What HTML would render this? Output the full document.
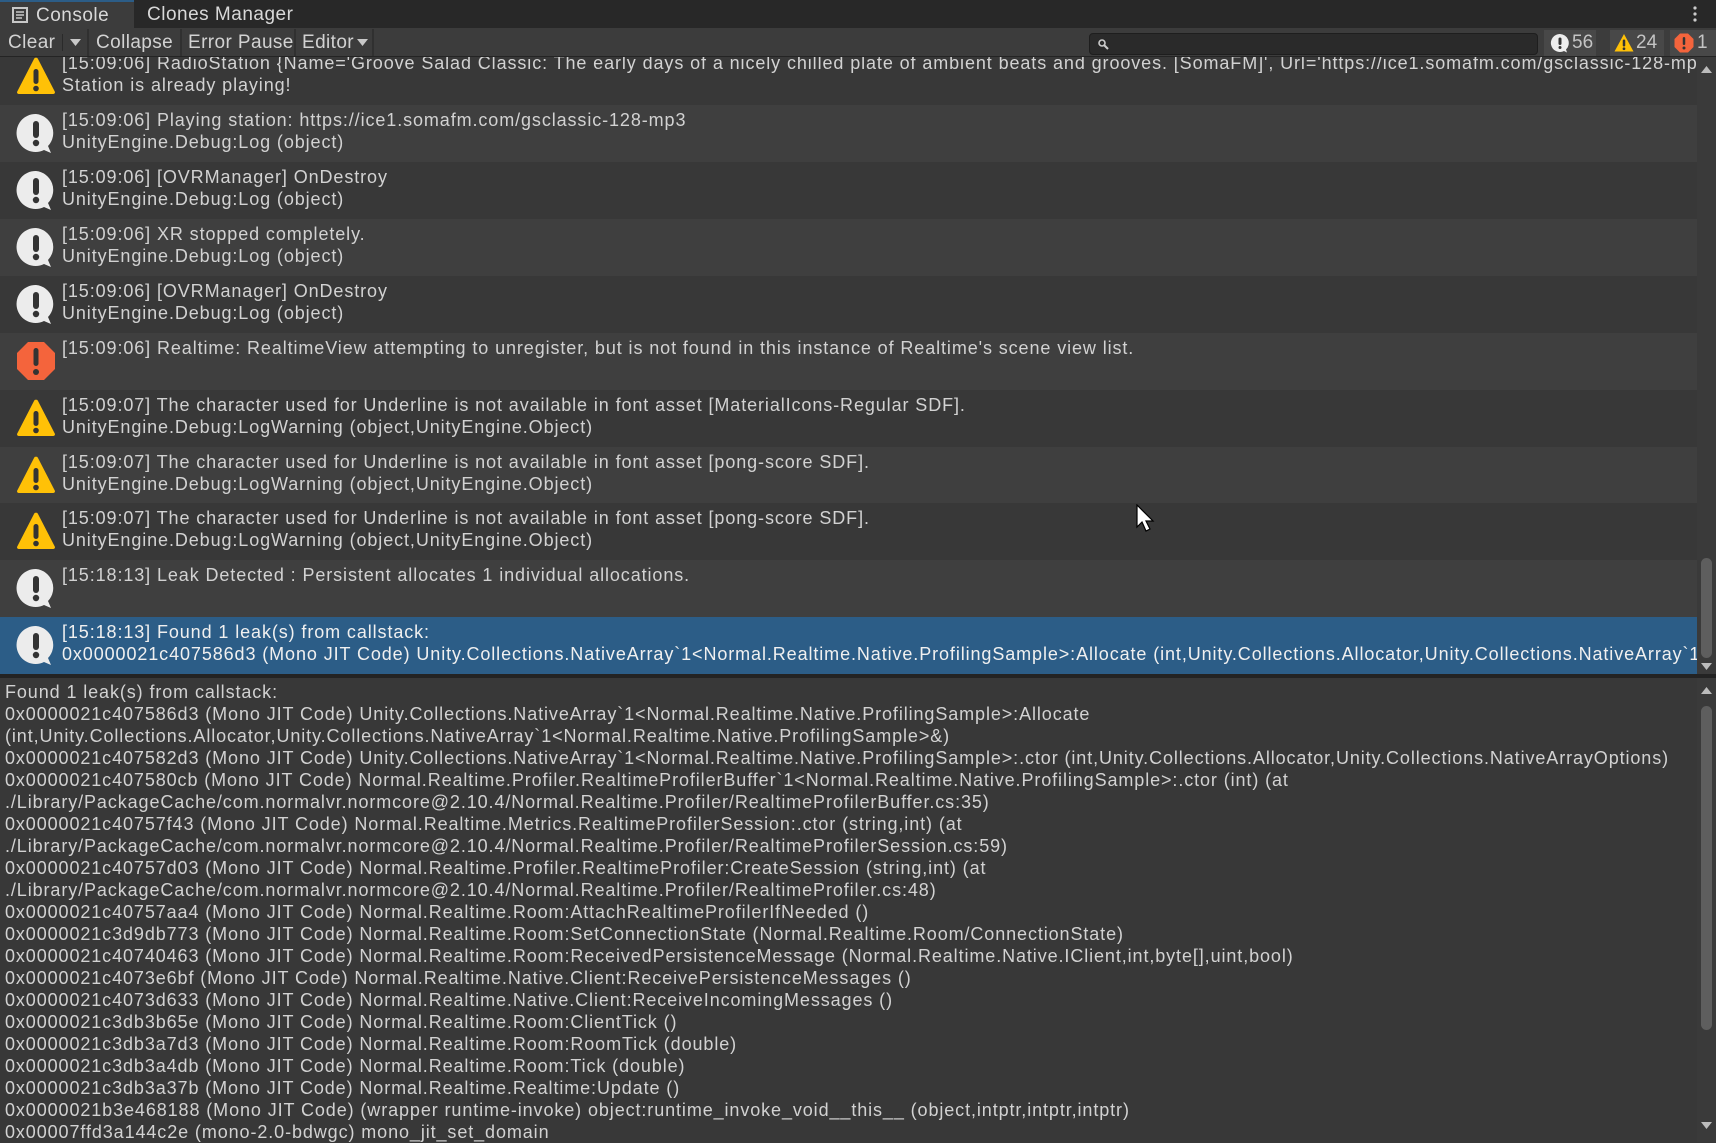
<!DOCTYPE html>
<html><head><meta charset="utf-8"><style>
*{margin:0;padding:0;box-sizing:border-box}
body{width:1716px;height:1142px;overflow:hidden;background:#383838;font-family:"Liberation Sans",sans-serif;color:#d2d2d2;position:relative}
.tabs{position:absolute;left:0;top:0;width:1716px;height:28px;background:#282828;z-index:5}
.tab1{position:absolute;left:0;top:0;width:134px;height:28px;background:#3c3c3c;border-top:2px solid #2c5d87;font-size:19px;line-height:27px;padding-left:36px;color:#d8d8d8;letter-spacing:0.5px;z-index:6}
.tab2{position:absolute;left:147px;top:0;font-size:19px;line-height:29px;color:#d8d8d8;letter-spacing:0.5px;z-index:6}
.tb{position:absolute;left:0;top:28px;width:1716px;height:29px;background:#3c3c3c;border-bottom:1px solid #242424;z-index:5}
.btn{position:absolute;top:1px;height:27px;font-size:19px;line-height:27px;color:#d2d2d2;padding-left:3px;letter-spacing:0.4px}
.sep{position:absolute;top:1px;width:2px;height:27px;background:#303030}
.search{position:absolute;left:1089px;top:33px;width:449px;height:22px;background:#2a2a2a;border:1px solid #1e1e1e;border-radius:4px;z-index:6}
.badge{position:absolute;top:30px;height:26px;background:#484848;font-size:19px;line-height:26px;color:#c4c4c4;z-index:6}
.row{position:absolute;left:0;width:1697px;height:57px;font-size:18px;letter-spacing:0.9px;line-height:22px;padding-left:62px;padding-top:4px;white-space:nowrap;overflow:hidden}
.a{background:#383838}.b{background:#3f3f3f}
.sel{background:#2c5d87;color:#f0f0f0}
.ic{position:absolute;left:16px;top:8px;width:40px;height:40px}
.split{position:absolute;left:0;top:674px;width:1716px;height:4px;background:#232323}
.det{position:absolute;left:5px;top:681px;font-size:18px;letter-spacing:0.9px;line-height:22px;white-space:pre;color:#d2d2d2}
.sb{position:absolute;left:1697px;width:19px;background:#3a3a3a}
.thumb{position:absolute;left:1701px;width:11px;background:#5e5e5e;border-radius:6px}
</style></head><body>
<div class="tabs"></div>
<div class="tab1"><svg style="position:absolute;left:12px;top:5px" width="16" height="16" viewBox="0 0 16 16"><rect x="1" y="1" width="14" height="14" fill="none" stroke="#c8c8c8" stroke-width="2"/><path d="M4 5h8M4 8h8M4 11h6" stroke="#c8c8c8" stroke-width="1.6"/></svg>Console</div>
<div class="tab2">Clones Manager</div>
<svg style="position:absolute;left:1692px;top:5px;z-index:7" width="6" height="18"><circle cx="3" cy="3" r="1.6" fill="#ccc"/><circle cx="3" cy="9" r="1.6" fill="#ccc"/><circle cx="3" cy="15" r="1.6" fill="#ccc"/></svg>
<div class="tb">
<div class="btn" style="left:5px">Clear</div>
<div class="sep" style="left:62px;width:1px;top:6px;height:17px;background:#2a2a2a"></div>
<svg style="position:absolute;left:70px;top:11px" width="11" height="7"><path d="M0 0h11L5.5 7z" fill="#c8c8c8"/></svg>
<div class="sep" style="left:87px"></div>
<div class="btn" style="left:93px">Collapse</div>
<div class="sep" style="left:180px"></div>
<div class="btn" style="left:185px">Error Pause</div>
<div class="sep" style="left:294px"></div>
<div class="btn" style="left:299px">Editor</div>
<svg style="position:absolute;left:357px;top:11px" width="11" height="7"><path d="M0 0h11L5.5 7z" fill="#c8c8c8"/></svg>
<div class="sep" style="left:372px"></div>
</div>
<div class="search"><svg style="position:absolute;left:7px;top:4px" width="12" height="12"><circle cx="5" cy="5" r="3" fill="none" stroke="#ccc" stroke-width="1.6"/><path d="M7 7l4 4" stroke="#ccc" stroke-width="2"/></svg></div>
<div class="badge" style="left:1544px;width:52px"><svg style="position:absolute;left:6px;top:3px" width="20" height="20" viewBox="0 0 40 40"><path d="M20 2a18 18 0 1 0 8 34l6 3-2-6A18 18 0 0 0 20 2z" fill="#eee"/><rect x="17" y="9" width="6" height="15" rx="3" fill="#333"/><circle cx="20" cy="29" r="3" fill="#333"/></svg><span style="position:absolute;left:28px">56</span></div>
<div class="badge" style="left:1610px;width:54px"><svg style="position:absolute;left:4px;top:3px" width="20" height="20" viewBox="0 0 40 40"><path d="M20 2L39 37H1z" fill="#ffc107"/><rect x="17.5" y="13" width="5" height="14" rx="2.5" fill="#333"/><circle cx="20" cy="31.5" r="2.7" fill="#333"/></svg><span style="position:absolute;left:26px">24</span></div>
<div class="badge" style="left:1670px;width:46px"><svg style="position:absolute;left:4px;top:3px" width="20" height="20" viewBox="0 0 40 40"><path d="M12 1h16l11 11v16L28 39H12L1 28V12z" fill="#f4643c"/><rect x="17.5" y="8" width="5" height="16" rx="2.5" fill="#333"/><circle cx="20" cy="30" r="3" fill="#333"/></svg><span style="position:absolute;left:27px">1</span></div>

<svg width="0" height="0" style="position:absolute"><defs>
<g id="info"><path d="M20 1a19 19 0 1 0 8 36l7 3-3-7A19 19 0 0 0 20 1z" fill="#ececec"/><rect x="17" y="8" width="6" height="17" rx="3" fill="#333"/><circle cx="20" cy="30" r="3.2" fill="#333"/></g>
<g id="warn"><path d="M20 2Q21 1 22 3L39 36Q39 38 37 38H3Q1 38 1 36L18 3Q19 1 20 2z" fill="#ffc107"/><rect x="17.5" y="13" width="5" height="15" rx="2.5" fill="#333"/><circle cx="20" cy="32.5" r="2.8" fill="#333"/></g>
<g id="err"><path d="M12 1h16l11 11v16L28 39H12L1 28V12z" fill="#f4643c"/><rect x="17.5" y="7" width="5" height="18" rx="2.5" fill="#333"/><circle cx="20" cy="31" r="3" fill="#333"/></g>
</defs></svg>

<div class="row a" style="top:48px"><svg class="ic" viewBox="0 0 40 40"><use href="#warn"/></svg>[15:09:06] RadioStation {Name='Groove Salad Classic: The early days of a nicely chilled plate of ambient beats and grooves. [SomaFM]', Url='https://ice1.somafm.com/gsclassic-128-mp3', <br>Station is already playing!</div>
<div class="row b" style="top:105px"><svg class="ic" viewBox="0 0 40 40"><use href="#info"/></svg>[15:09:06] Playing station: https://ice1.somafm.com/gsclassic-128-mp3<br>UnityEngine.Debug:Log (object)</div>
<div class="row a" style="top:162px"><svg class="ic" viewBox="0 0 40 40"><use href="#info"/></svg>[15:09:06] [OVRManager] OnDestroy<br>UnityEngine.Debug:Log (object)</div>
<div class="row b" style="top:219px"><svg class="ic" viewBox="0 0 40 40"><use href="#info"/></svg>[15:09:06] XR stopped completely.<br>UnityEngine.Debug:Log (object)</div>
<div class="row a" style="top:276px"><svg class="ic" viewBox="0 0 40 40"><use href="#info"/></svg>[15:09:06] [OVRManager] OnDestroy<br>UnityEngine.Debug:Log (object)</div>
<div class="row b" style="top:333px"><svg class="ic" viewBox="0 0 40 40"><use href="#err"/></svg>[15:09:06] Realtime: RealtimeView attempting to unregister, but is not found in this instance of Realtime's scene view list.</div>
<div class="row a" style="top:390px"><svg class="ic" viewBox="0 0 40 40"><use href="#warn"/></svg>[15:09:07] The character used for Underline is not available in font asset [MaterialIcons-Regular SDF].<br>UnityEngine.Debug:LogWarning (object,UnityEngine.Object)</div>
<div class="row b" style="top:447px"><svg class="ic" viewBox="0 0 40 40"><use href="#warn"/></svg>[15:09:07] The character used for Underline is not available in font asset [pong-score SDF].<br>UnityEngine.Debug:LogWarning (object,UnityEngine.Object)</div>
<div class="row a" style="top:503px"><svg class="ic" viewBox="0 0 40 40"><use href="#warn"/></svg>[15:09:07] The character used for Underline is not available in font asset [pong-score SDF].<br>UnityEngine.Debug:LogWarning (object,UnityEngine.Object)</div>
<div class="row b" style="top:560px"><svg class="ic" viewBox="0 0 40 40"><use href="#info"/></svg>[15:18:13] Leak Detected : Persistent allocates 1 individual allocations.</div>
<div class="row sel" style="top:617px"><svg class="ic" viewBox="0 0 40 40"><use href="#info"/></svg>[15:18:13] Found 1 leak(s) from callstack:<br>0x0000021c407586d3 (Mono JIT Code) Unity.Collections.NativeArray`1&lt;Normal.Realtime.Native.ProfilingSample&gt;:Allocate (int,Unity.Collections.Allocator,Unity.Collections.NativeArray`1&lt;Normal.Realtime.Native.ProfilingSample&gt;&amp;)</div>
<div class="sb" style="top:57px;height:617px"></div>
<div class="thumb" style="top:558px;height:100px"></div>
<svg style="position:absolute;left:1701px;top:66px" width="11" height="7"><path d="M0 7h11L5.5 0z" fill="#bbb"/></svg>
<svg style="position:absolute;left:1701px;top:663px" width="11" height="7"><path d="M0 0h11L5.5 7z" fill="#bbb"/></svg>
<div class="split"></div>
<div class="det">Found 1 leak(s) from callstack:
0x0000021c407586d3 (Mono JIT Code) Unity.Collections.NativeArray`1&lt;Normal.Realtime.Native.ProfilingSample&gt;:Allocate
(int,Unity.Collections.Allocator,Unity.Collections.NativeArray`1&lt;Normal.Realtime.Native.ProfilingSample&gt;&amp;)
0x0000021c407582d3 (Mono JIT Code) Unity.Collections.NativeArray`1&lt;Normal.Realtime.Native.ProfilingSample&gt;:.ctor (int,Unity.Collections.Allocator,Unity.Collections.NativeArrayOptions)
0x0000021c407580cb (Mono JIT Code) Normal.Realtime.Profiler.RealtimeProfilerBuffer`1&lt;Normal.Realtime.Native.ProfilingSample&gt;:.ctor (int) (at
./Library/PackageCache/com.normalvr.normcore@2.10.4/Normal.Realtime.Profiler/RealtimeProfilerBuffer.cs:35)
0x0000021c40757f43 (Mono JIT Code) Normal.Realtime.Metrics.RealtimeProfilerSession:.ctor (string,int) (at
./Library/PackageCache/com.normalvr.normcore@2.10.4/Normal.Realtime.Profiler/RealtimeProfilerSession.cs:59)
0x0000021c40757d03 (Mono JIT Code) Normal.Realtime.Profiler.RealtimeProfiler:CreateSession (string,int) (at
./Library/PackageCache/com.normalvr.normcore@2.10.4/Normal.Realtime.Profiler/RealtimeProfiler.cs:48)
0x0000021c40757aa4 (Mono JIT Code) Normal.Realtime.Room:AttachRealtimeProfilerIfNeeded ()
0x0000021c3d9db773 (Mono JIT Code) Normal.Realtime.Room:SetConnectionState (Normal.Realtime.Room/ConnectionState)
0x0000021c40740463 (Mono JIT Code) Normal.Realtime.Room:ReceivedPersistenceMessage (Normal.Realtime.Native.IClient,int,byte[],uint,bool)
0x0000021c4073e6bf (Mono JIT Code) Normal.Realtime.Native.Client:ReceivePersistenceMessages ()
0x0000021c4073d633 (Mono JIT Code) Normal.Realtime.Native.Client:ReceiveIncomingMessages ()
0x0000021c3db3b65e (Mono JIT Code) Normal.Realtime.Room:ClientTick ()
0x0000021c3db3a7d3 (Mono JIT Code) Normal.Realtime.Room:RoomTick (double)
0x0000021c3db3a4db (Mono JIT Code) Normal.Realtime.Room:Tick (double)
0x0000021c3db3a37b (Mono JIT Code) Normal.Realtime.Realtime:Update ()
0x0000021b3e468188 (Mono JIT Code) (wrapper runtime-invoke) object:runtime_invoke_void__this__ (object,intptr,intptr,intptr)
0x00007ffd3a144c2e (mono-2.0-bdwgc) mono_jit_set_domain</div>
<div class="sb" style="top:678px;height:464px"></div>
<div class="thumb" style="top:706px;height:324px"></div>
<svg style="position:absolute;left:1701px;top:687px" width="11" height="7"><path d="M0 7h11L5.5 0z" fill="#bbb"/></svg>
<svg style="position:absolute;left:1701px;top:1122px" width="11" height="7"><path d="M0 0h11L5.5 7z" fill="#bbb"/></svg>
<svg style="position:absolute;left:1136px;top:504px" width="20" height="28" viewBox="0 0 20 28"><path d="M1 1v22l5-5 4 9 4-2-4-8h7z" fill="#fff" stroke="#000" stroke-width="1.2"/></svg>
</body></html>
